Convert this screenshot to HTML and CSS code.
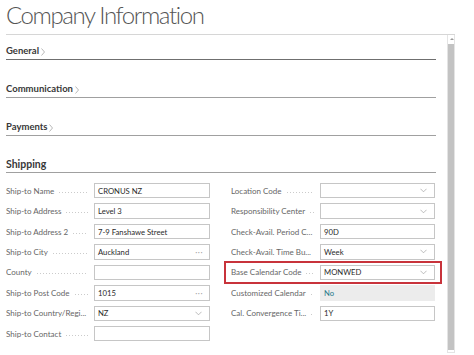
FILE: index.html
```html
<!DOCTYPE html>
<html>
<head>
<meta charset="utf-8">
<link rel="stylesheet" href="styles.css">
</head>
<body>
<div class="header"><h1 class="title">Company Information</h1></div>
<div class="main">
  <div class="content">
    <div class="sec-head first strong">General<svg class="chev" viewBox="0 0 4 8"><path d="M0.5 0.5 L3.5 4 L0.5 7.5" fill="none" stroke="#a6a6a6" stroke-width="0.8"/></svg></div>
    <div class="sec-head">Communication<svg class="chev" viewBox="0 0 4 8"><path d="M0.5 0.5 L3.5 4 L0.5 7.5" fill="none" stroke="#a6a6a6" stroke-width="0.8"/></svg></div>
    <div class="sec-head">Payments<svg class="chev" viewBox="0 0 4 8"><path d="M0.5 0.5 L3.5 4 L0.5 7.5" fill="none" stroke="#a6a6a6" stroke-width="0.8"/></svg></div>
    <div class="sec-head ship">Shipping</div>
    <div class="cols">
      <div class="col left">
        <div class="field"><div class="lbl">Ship-to Name</div><div class="inp">CRONUS NZ</div></div>
        <div class="field"><div class="lbl">Ship-to Address</div><div class="inp">Level 3</div></div>
        <div class="field"><div class="lbl">Ship-to Address 2</div><div class="inp">7-9 Fanshawe Street</div></div>
        <div class="field"><div class="lbl">Ship-to City</div><div class="inp"><span>Auckland</span><span class="dots">···</span></div></div>
        <div class="field"><div class="lbl">County</div><div class="inp"></div></div>
        <div class="field"><div class="lbl">Ship-to Post Code</div><div class="inp"><span>1015</span><span class="dots">···</span></div></div>
        <div class="field"><div class="lbl">Ship-to Country/Regi...</div><div class="inp"><span>NZ</span><svg class="ico" viewBox="0 0 8 5"><path d="M0.5 0.5 L4 4 L7.5 0.5" fill="none" stroke="#a0a0a0" stroke-width="0.8"/></svg></div></div>
        <div class="field"><div class="lbl">Ship-to Contact</div><div class="inp"></div></div>
      </div>
      <div class="col right">
        <div class="field"><div class="lbl">Location Code</div><div class="inp"><span></span><svg class="ico" viewBox="0 0 8 5"><path d="M0.5 0.5 L4 4 L7.5 0.5" fill="none" stroke="#a0a0a0" stroke-width="0.8"/></svg></div></div>
        <div class="field"><div class="lbl">Responsibility Center</div><div class="inp"><span></span><svg class="ico" viewBox="0 0 8 5"><path d="M0.5 0.5 L4 4 L7.5 0.5" fill="none" stroke="#a0a0a0" stroke-width="0.8"/></svg></div></div>
        <div class="field"><div class="lbl">Check-Avail. Period C...</div><div class="inp">90D</div></div>
        <div class="field"><div class="lbl">Check-Avail. Time Bu...</div><div class="inp"><span>Week</span><svg class="ico" viewBox="0 0 8 5"><path d="M0.5 0.5 L4 4 L7.5 0.5" fill="none" stroke="#a0a0a0" stroke-width="0.8"/></svg></div></div>
        <div class="field hl"><div class="lbl">Base Calendar Code</div><div class="inp"><span>MONWED</span><svg class="ico" viewBox="0 0 8 5"><path d="M0.5 0.5 L4 4 L7.5 0.5" fill="none" stroke="#a0a0a0" stroke-width="0.8"/></svg></div></div>
        <div class="field"><div class="lbl">Customized Calendar</div><div class="inp ro">No</div></div>
        <div class="field"><div class="lbl">Cal. Convergence Ti...</div><div class="inp">1Y</div></div>
      </div>
    </div>
  </div>
  <div class="scroll">
    <div class="arrow"></div>
    <div class="thumb"></div>
  </div>
</div>
</body>
</html>
```
FILE: styles.css
```css
html, body {
  margin: 0;
  padding: 0;
  background: #fff;
  font-family: "Lato", "Open Sans", sans-serif;
}
.header {
  margin: 0 19px 0 6px;
  height: 34px;
  border-bottom: 1px solid #d6d6d6;
}
.title {
  margin: 0;
  padding-top: 1px;
  font-size: 24px;
  font-weight: 300;
  color: #555;
  line-height: 28px;
  letter-spacing: -1.4px;
  white-space: nowrap;
}
.main {
  display: flex;
  align-items: flex-start;
}
.content {
  margin-left: 6px;
  width: 430px;
}
.sec-head {
  height: 16px;
  margin-top: 21px;
  border-bottom: 1px solid #a0a0a0;
  font-size: 9.5px;
  font-weight: 700;
  color: #383838;
  line-height: 16px;
  display: flex;
  align-items: center;
}
.sec-head.first { margin-top: 8px; }
.sec-head.strong { border-bottom-color: #6f6f6f; }
.sec-head.ship {
  margin-top: 20px;
  font-size: 10.5px;
}
.chev {
  width: 4px;
  height: 8px;
  margin-left: 2px;
  margin-top: 1px;
}
.cols {
  display: flex;
  gap: 21px;
  margin-top: 10px;
}
.col {
  display: flex;
  flex-direction: column;
  gap: 5px;
}
.field {
  display: flex;
  height: 15.43px;
}
.left .lbl { width: 88px; }
.left .inp { width: 116px; }
.right .lbl { width: 89px; }
.right .inp { width: 115px; }
.lbl {
  box-sizing: border-box;
  font-size: 8px;
  color: #666;
  white-space: nowrap;
  overflow: hidden;
  display: flex;
  align-items: center;
  padding-right: 6px;
}
.lbl::after {
  content: "";
  flex: 1;
  margin-left: 4px;
  height: 1px;
  margin-top: 3px;
  background-image: radial-gradient(circle, #cbcbcb 0.5px, transparent 0.7px);
  background-size: 3px 1px;
  background-repeat: repeat-x;
}
.inp {
  box-sizing: border-box;
  border: 1px solid #c6c6c6;
  font-size: 7.7px;
  color: #2a2a2a;
  padding: 0 6px 0 3px;
  display: flex;
  align-items: center;
  justify-content: space-between;
}
.inp.ro {
  background: #ececec;
  border-color: #ececec;
  color: #1f7889;
}
.dots {
  color: #a0a0a0;
  font-size: 8px;
  letter-spacing: 0.5px;
}
.ico {
  width: 7px;
  height: 5px;
  margin-right: 1px;
}
.hl {
  position: relative;
}
.hl::before {
  content: "";
  position: absolute;
  left: -7px;
  right: -7px;
  top: -4px;
  bottom: -4px;
  border: 2px solid #c8333b;
  pointer-events: none;
}
.scroll {
  margin-left: 11px;
  width: 8px;
  height: 318px;
  box-sizing: border-box;
  border: 1px solid #e4e4e4;
  border-top: 0;
  position: relative;
}
.arrow {
  position: absolute;
  left: 1.5px;
  top: 3px;
  width: 0;
  height: 0;
  border-left: 2px solid transparent;
  border-right: 2px solid transparent;
  border-bottom: 2px solid #9a9a9a;
}
.thumb {
  position: absolute;
  left: 0;
  right: 0;
  top: 9px;
  bottom: 2px;
  background: #c3c3c3;
}
```
